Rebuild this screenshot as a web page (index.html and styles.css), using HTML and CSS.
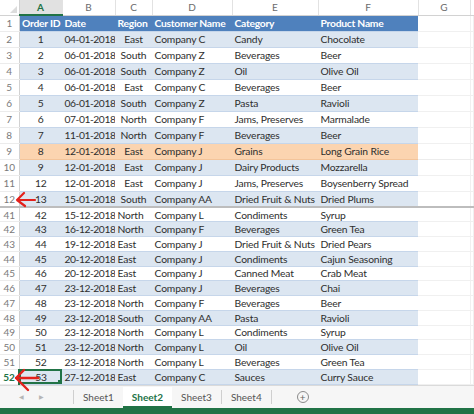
FILE: index.html
```html
<!DOCTYPE html>
<html lang="en">
<head>
    <meta charset="UTF-8">
    <title>Orders</title>
    <link rel="stylesheet" href="styles.css">
</head>
<body>
    <div class="sheet-wrap">
        <table class="sheet">
            <colgroup>
                <col style="width:19px"><col style="width:43px"><col style="width:53px"><col style="width:37px">
                <col style="width:80px"><col style="width:86px"><col style="width:100px"><col style="width:52px"><col>
            </colgroup>
            <tr class="colhead">
                <th class="corner"><span class="tri"></span></th>
                <th class="active">A</th><th>B</th><th>C</th><th>D</th><th>E</th><th>F</th><th>G</th><th class="end"></th>
            </tr>
            <tr class="top head">
                <td class="rn">1</td><td>Order ID</td><td>Date</td><td>Region</td><td>Customer Name</td><td>Category</td><td>Product Name</td><td class="out"></td><td class="out"></td>
            </tr>
            <tr class="top band">
                <td class="rn">2</td><td class="ctr">1</td><td>04-01-2018</td><td class="ctr">East</td><td>Company C</td><td>Candy</td><td>Chocolate</td><td class="out"></td><td class="out"></td>
            </tr>
            <tr class="top">
                <td class="rn">3</td><td class="ctr">2</td><td>06-01-2018</td><td class="ctr">South</td><td>Company Z</td><td>Beverages</td><td>Beer</td><td class="out"></td><td class="out"></td>
            </tr>
            <tr class="top band">
                <td class="rn">4</td><td class="ctr">3</td><td>06-01-2018</td><td class="ctr">South</td><td>Company Z</td><td>Oil</td><td>Olive Oil</td><td class="out"></td><td class="out"></td>
            </tr>
            <tr class="top">
                <td class="rn">5</td><td class="ctr">4</td><td>06-01-2018</td><td class="ctr">East</td><td>Company C</td><td>Beverages</td><td>Beer</td><td class="out"></td><td class="out"></td>
            </tr>
            <tr class="top band">
                <td class="rn">6</td><td class="ctr">5</td><td>06-01-2018</td><td class="ctr">South</td><td>Company Z</td><td>Pasta</td><td>Ravioli</td><td class="out"></td><td class="out"></td>
            </tr>
            <tr class="top">
                <td class="rn">7</td><td class="ctr">6</td><td>07-01-2018</td><td class="ctr">North</td><td>Company F</td><td>Jams, Preserves</td><td>Marmalade</td><td class="out"></td><td class="out"></td>
            </tr>
            <tr class="top band">
                <td class="rn">8</td><td class="ctr">7</td><td>11-01-2018</td><td class="ctr">North</td><td>Company F</td><td>Beverages</td><td>Beer</td><td class="out"></td><td class="out"></td>
            </tr>
            <tr class="top hi">
                <td class="rn">9</td><td class="ctr">8</td><td>12-01-2018</td><td class="ctr">East</td><td>Company J</td><td>Grains</td><td>Long Grain Rice</td><td class="out"></td><td class="out"></td>
            </tr>
            <tr class="top band">
                <td class="rn">10</td><td class="ctr">9</td><td>12-01-2018</td><td class="ctr">East</td><td>Company J</td><td>Dairy Products</td><td>Mozzarella</td><td class="out"></td><td class="out"></td>
            </tr>
            <tr class="top">
                <td class="rn">11</td><td class="ctr">12</td><td>12-01-2018</td><td class="ctr">East</td><td>Company J</td><td>Jams, Preserves</td><td>Boysenberry Spread</td><td class="out"></td><td class="out"></td>
            </tr>
            <tr class="top band split">
                <td class="rn">12</td><td class="ctr">13</td><td>15-01-2018</td><td class="ctr">South</td><td>Company AA</td><td>Dried Fruit &amp; Nuts</td><td>Dried Plums</td><td class="out"></td><td class="out"></td>
            </tr>
            <tr class="low">
                <td class="rn">41</td><td class="ctr">42</td><td>15-12-2018</td><td>North</td><td>Company L</td><td>Condiments</td><td>Syrup</td><td class="out"></td><td class="out"></td>
            </tr>
            <tr class="low band">
                <td class="rn">42</td><td class="ctr">43</td><td>16-12-2018</td><td>North</td><td>Company F</td><td>Beverages</td><td>Green Tea</td><td class="out"></td><td class="out"></td>
            </tr>
            <tr class="low">
                <td class="rn">43</td><td class="ctr">44</td><td>19-12-2018</td><td>East</td><td>Company J</td><td>Dried Fruit &amp; Nuts</td><td>Dried Pears</td><td class="out"></td><td class="out"></td>
            </tr>
            <tr class="low band">
                <td class="rn">44</td><td class="ctr">45</td><td>20-12-2018</td><td>East</td><td>Company J</td><td>Condiments</td><td>Cajun Seasoning</td><td class="out"></td><td class="out"></td>
            </tr>
            <tr class="low">
                <td class="rn">45</td><td class="ctr">46</td><td>20-12-2018</td><td>East</td><td>Company J</td><td>Canned Meat</td><td>Crab Meat</td><td class="out"></td><td class="out"></td>
            </tr>
            <tr class="low band">
                <td class="rn">46</td><td class="ctr">47</td><td>23-12-2018</td><td>East</td><td>Company J</td><td>Beverages</td><td>Chai</td><td class="out"></td><td class="out"></td>
            </tr>
            <tr class="low">
                <td class="rn">47</td><td class="ctr">48</td><td>23-12-2018</td><td>North</td><td>Company F</td><td>Beverages</td><td>Beer</td><td class="out"></td><td class="out"></td>
            </tr>
            <tr class="low band">
                <td class="rn">48</td><td class="ctr">49</td><td>23-12-2018</td><td>South</td><td>Company AA</td><td>Pasta</td><td>Ravioli</td><td class="out"></td><td class="out"></td>
            </tr>
            <tr class="low">
                <td class="rn">49</td><td class="ctr">50</td><td>23-12-2018</td><td>North</td><td>Company L</td><td>Condiments</td><td>Syrup</td><td class="out"></td><td class="out"></td>
            </tr>
            <tr class="low band">
                <td class="rn">50</td><td class="ctr">51</td><td>23-12-2018</td><td>North</td><td>Company L</td><td>Oil</td><td>Olive Oil</td><td class="out"></td><td class="out"></td>
            </tr>
            <tr class="low">
                <td class="rn">51</td><td class="ctr">52</td><td>23-12-2018</td><td>North</td><td>Company L</td><td>Beverages</td><td>Green Tea</td><td class="out"></td><td class="out"></td>
            </tr>
            <tr class="low band">
                <td class="rn cur">52</td><td class="ctr sel">53</td><td>27-12-2018</td><td>East</td><td>Company C</td><td>Sauces</td><td>Curry Sauce</td><td class="out"></td><td class="out"></td>
            </tr>
        </table>

        <svg class="arrow arrow-1" width="30" height="20" viewBox="0 0 30 20">
            <path d="M21 10 H3 M10 3 L3 10 L11 16" fill="none" stroke="#e3211c" stroke-width="2.2" stroke-linecap="round" stroke-linejoin="round"/>
        </svg>
        <svg class="arrow arrow-2" width="34" height="28" viewBox="0 0 34 28">
            <path d="M25 12 H3 M11 4 L3 12 L15 24" fill="none" stroke="#e3211c" stroke-width="2.4" stroke-linecap="round" stroke-linejoin="round"/>
        </svg>
    </div>

    <div class="tabbar">
        <div class="nav"><span>&#9664;</span><span>&#9654;</span></div>
        <div class="tab">Sheet1</div>
        <div class="tab active">Sheet2</div>
        <div class="tab">Sheet3</div>
        <div class="tab">Sheet4</div>
        <div class="add">+</div>
    </div>
    <div class="status"></div>
</body>
</html>
```

FILE: styles.css
```css
body{
    margin:0px;
    padding:0px;
    width:474px;
    height:414px;
    overflow:hidden;
    background-color:#ffffff;
    font-family:Lato, "Liberation Sans", sans-serif;
}

.sheet-wrap{
    position:relative;
}

.sheet{
    table-layout:fixed;
    border-collapse:collapse;
    width:474px;
    font-size:10.3px;
    letter-spacing:-0.15px;
    color:#2e2e2e;
}

.sheet td, .sheet th{
    padding:0px 0px 0px 2.5px;
    white-space:nowrap;
    overflow:hidden;
    text-align:left;
    box-sizing:border-box;
}

/* dates are wider in Lato than in the sheet font */
.sheet td:nth-child(3){
    letter-spacing:-0.45px;
}

.colhead th{
    height:15px;
    font-weight:normal;
    font-size:10px;
    letter-spacing:0px;
    color:#6b6b6b;
    text-align:center;
    padding:0px;
    border-right:1px solid #e2e2e2;
    border-bottom:1px solid #d2d2d2;
    background-color:#ffffff;
}

.colhead th.corner{
    position:relative;
    border-right:1px solid #d2d2d2;
}

.corner .tri{
    position:absolute;
    right:2px;
    bottom:2px;
    width:0;
    height:0;
    border-left:7px solid transparent;
    border-bottom:7px solid #dcdcdc;
}

.colhead th.active{
    background-color:#e1e1e1;
    color:#217346;
    font-weight:bold;
    border-bottom:2px solid #217346;
}

.colhead th.end{
    border-right:none;
}

.sheet tr.top td{
    height:16px;
}

.sheet tr.low td{
    height:14.75px;
}

.sheet td.rn{
    padding:0px;
    text-align:center;
    font-size:10px;
    letter-spacing:0px;
    color:#7a7a7a;
    border-right:1px solid #d2d2d2;
    border-bottom:1px solid #ececec;
    background-color:#ffffff;
}

.sheet td.rn.cur{
    background-color:#e1e1e1;
    color:#217346;
    font-weight:bold;
    border-right:2px solid #217346;
}

.sheet td{
    border-bottom:1px solid #c6d6ea;
}

.sheet td.out{
    background-color:#ffffff;
    border-bottom:1px solid #f0f0f0;
    border-right:1px solid #f0f0f0;
}

.sheet td.ctr{
    text-align:center;
    padding:0px;
}

.sheet tr.head td{
    background-color:#4f81bd;
    color:#ffffff;
    font-weight:bold;
    letter-spacing:-0.25px;
}

.sheet tr.head td.rn, .sheet tr.head td.out{
    background-color:#ffffff;
    color:#7a7a7a;
    font-weight:normal;
}

.sheet tr.band td{
    background-color:#dce6f1;
}

.sheet tr.band td.rn, .sheet tr.band td.out{
    background-color:#ffffff;
}

.sheet tr.hi td{
    background-color:#fbd4b0;
    border-bottom-color:#f3c49a;
}

.sheet tr.hi td.rn, .sheet tr.hi td.out{
    background-color:#ffffff;
    border-bottom-color:#ececec;
}

.sheet tr.split td{
    border-bottom:2px solid #bdbdbd;
}

.sheet tr.split td.rn, .sheet tr.split td.out{
    border-bottom:2px solid #bdbdbd;
}

.sheet td.sel{
    position:relative;
    outline:2px solid #217346;
    outline-offset:-2px;
}

.sheet td.sel::after{
    content:"";
    position:absolute;
    right:0px;
    bottom:0px;
    width:4px;
    height:4px;
    background-color:#217346;
}

.arrow{
    position:absolute;
}

.arrow-1{
    left:14px;
    top:190px;
}

.arrow-2{
    left:13px;
    top:366px;
}

.tabbar{
    height:23px;
    display:flex;
    align-items:center;
    background-color:#f6f6f6;
    border-top:1px solid #dadada;
    box-sizing:border-box;
    font-size:10px;
    color:#555555;
}

.tabbar .nav{
    width:74px;
    display:flex;
    gap:15px;
    padding-left:19px;
    box-sizing:border-box;
    font-size:6px;
    color:#b5b5b5;
    border-right:1px solid #cfcfcf;
    height:14px;
    align-items:center;
}

.tabbar .tab{
    padding:0px 9px;
    height:14px;
    line-height:14px;
    border-right:1px solid #cfcfcf;
}

.tabbar .tab:nth-child(2){
    border-right:none;
}

.tabbar .tab.active{
    height:21px;
    line-height:21px;
    margin-top:1px;
    background-color:#ffffff;
    color:#217346;
    font-weight:bold;
    border-right:none;
    box-shadow:inset 0px -2px 0px #217346;
    padding:0px 9px;
}

.tabbar .add{
    margin-left:25px;
    width:10px;
    height:10px;
    line-height:10px;
    text-align:center;
    border:1px solid #8a8a8a;
    border-radius:50%;
    font-size:10px;
    color:#666666;
}

.status{
    height:6px;
    background-color:#217346;
}
```
